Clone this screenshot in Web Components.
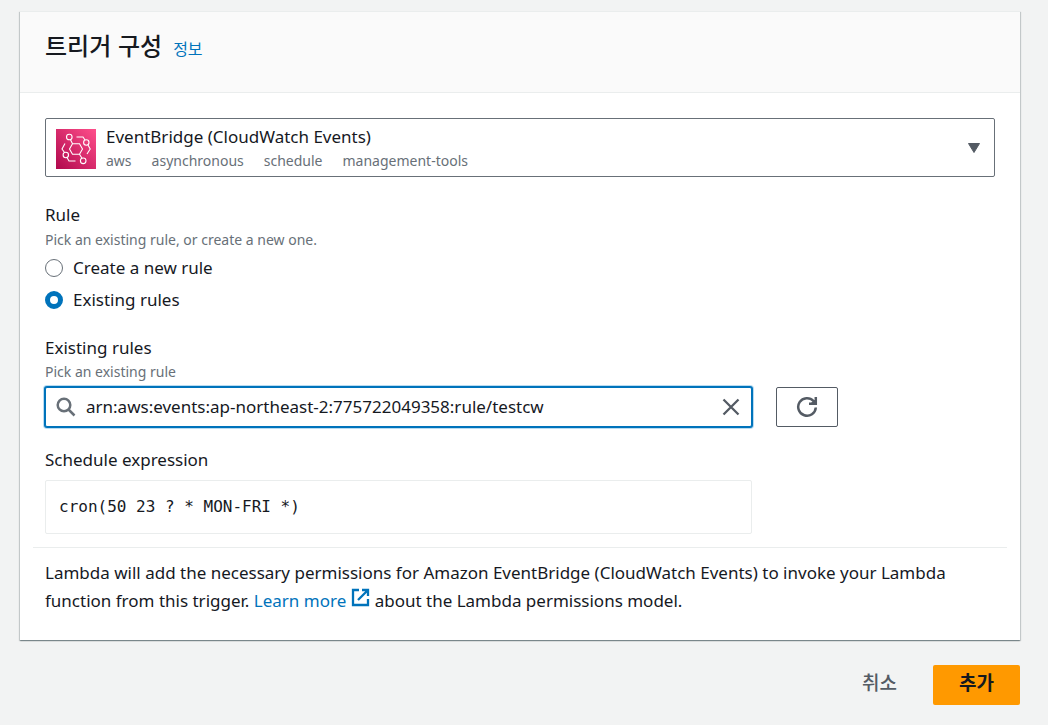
<!DOCTYPE html>
<html lang="ko">
<head>
<meta charset="utf-8">
<meta name="viewport" content="width=device-width, initial-scale=1">
<title>트리거 구성</title>
<style>
  :root {
    --text: #16191f;
    --muted: #687078;
    --icon: #545b64;
    --link: #0073bb;
    --line: #eaeded;
  }
  body {
    margin: 0;
    padding: 11px 28px 20px 20px;
    background: #f2f3f3;
    color: var(--text);
    font: 17px/24px "Noto Sans", "Noto Sans CJK KR", sans-serif;
  }
</style>
</head>
<body>
<trigger-page></trigger-page>

<script>
const define = (name, html) => {
  const template = document.createElement('template');
  template.innerHTML = html;
  customElements.define(name, class extends HTMLElement {
    constructor() {
      super();
      this.attachShadow({ mode: 'open' }).append(template.content.cloneNode(true));
    }
  });
};

define('info-card', `
  <style>
    :host { display: block; background: #fff; box-shadow: 0 1px 1px 0 rgba(0,28,36,.3), 1px 1px 1px 0 rgba(0,28,36,.15), -1px 1px 1px 0 rgba(0,28,36,.15); border-top: 1px solid var(--line); box-sizing: border-box; }
    header { display: flex; align-items: baseline; gap: 11px; padding: 17px 25px 31px; background: #fafafa; border-bottom: 1px solid var(--line); }
    .body { padding: 25px; }
  </style>
  <header><slot name="title"></slot><slot name="info"></slot></header>
  <div class="body"><slot></slot></div>
`);

define('trigger-select', `
  <style>
    :host { display: grid; grid-template-columns: auto 1fr auto; grid-template-rows: 28px 20px; column-gap: 10px; padding: 5px 14px 6px 11px; box-sizing: border-box; position: relative; color: var(--text); }
    select { position: absolute; inset: 0; width: 100%; height: 100%; box-sizing: border-box; appearance: none; margin: 0; padding: 0 50px 22px 60px; border: 1px solid #687078; border-radius: 2px; background: #fff; font: inherit; color: inherit; }
    .logo { grid-row: 1 / 3; align-self: center; margin-top: 4px; }
    .logo, .tags, .caret { position: relative; pointer-events: none; display: block; }
    .tags { grid-area: 2 / 2; display: flex; gap: 20px; font-size: 14px; line-height: 20px; color: var(--muted); }
    .caret { grid-area: 1 / 3 / 3 / 4; align-self: center; margin-top: 2px; }
  </style>
  <select aria-label="트리거"><option>EventBridge (CloudWatch Events)</option></select>
  <svg class="logo" width="40" height="40" viewBox="0 0 40 40" aria-hidden="true">
    <defs><linearGradient id="g" x1="0" y1="1" x2="1" y2="0"><stop stop-color="#b0084d"/><stop offset="1" stop-color="#ff4f8b"/></linearGradient></defs>
    <path fill="url(#g)" d="M0 0h40v40H0z"/>
    <g fill="none" stroke="#fff" stroke-width="1.1">
      <path d="M16.500 14.700h7l3 5.300-3 5.300h-7l-3-5.300zM14.400 10.500l2.100 4.200M23.500 25.300l2.500 4"/>
      <circle cx="13.300" cy="8" r="2.800"/><circle cx="30.300" cy="13.500" r="2.700"/><circle cx="9.800" cy="26" r="2.700"/><circle cx="27.200" cy="31.800" r="2.800"/>
      <path d="M20.500 8H27l2 3M32 16l2.200 4-3.200 5M9 14.500L6 20l2.500 3.500M11 28.500l2 3.500h6.500"/>
    </g>
  </svg>
  <div class="tags"><span>aws</span><span>asynchronous</span><span>schedule</span><span>management-tools</span></div>
  <svg class="caret" width="14" height="12" viewBox="0 0 14 12" aria-hidden="true"><path fill="#545b64" stroke="#545b64" stroke-linejoin="round" d="M1.500 1.500h11L7 10.500z"/></svg>
`);

define('rule-options', `
  <style>
    :host { display: block; }
    fieldset { margin: 0; padding: 0; border: 0; min-width: 0; }
    legend { padding: 0; }
    p { margin: 1px 0 0; font-size: 14px; color: var(--muted); }
    .list { display: grid; gap: 8px; margin-top: 4px; justify-items: start; }
    label { display: flex; align-items: center; gap: 10px; }
    input { appearance: none; box-sizing: border-box; width: 18px; height: 18px; margin: 0; border: 1px solid #687078; border-radius: 50%; background: #fff; }
    input:checked { border: 5px solid var(--link); }
  </style>
  <fieldset>
    <legend>Rule</legend>
    <p>Pick an existing rule, or create a new one.</p>
    <div class="list">
      <label><input type="radio" name="rule" value="new">Create a new rule</label>
      <label><input type="radio" name="rule" value="existing" checked>Existing rules</label>
    </div>
  </fieldset>
`);

define('rule-search', `
  <style>
    :host { display: grid; grid-template-columns: repeat(12, minmax(0, 1fr)); column-gap: 24px; }
    .label { grid-column: 1 / -1; margin-bottom: 3px; }
    label, small { display: block; }
    small { font-size: 14px; color: var(--muted); }
    .field { grid-column: span 9; display: flex; align-items: center; gap: 10px; height: 40px; box-sizing: border-box; padding: 0 11px 0 10px; border: 1px solid var(--link); border-radius: 2px; box-shadow: 0 0 0 1px var(--link), 0 0 0 2px #b9dcf2; background: #fff; }
    input { flex: 1; min-width: 0; padding: 0; border: 0; outline: 0; background: none; font: inherit; color: inherit; }
    button { display: grid; place-items: center; padding: 0; border: 0; background: none; color: var(--icon); }
    .refresh { width: 62px; height: 40px; border: 1px solid var(--icon); border-radius: 2px; background: #fff; }
    svg { display: block; fill: none; stroke: currentColor; }
    .search { color: var(--muted); }
  </style>
  <div class="label"><label for="rule">Existing rules</label><small id="hint">Pick an existing rule</small></div>
  <div class="field">
    <svg class="search" width="20" height="20" viewBox="0 0 20 20" stroke-width="2.500" aria-hidden="true"><circle cx="8" cy="8" r="6.300"/><path d="M12.500 12.500l6 6"/></svg>
    <input id="rule" type="text" aria-describedby="hint" value="arn:aws:events:ap-northeast-2:775722049358:rule/testcw">
    <button type="button" aria-label="Clear"><svg width="18" height="18" viewBox="0 0 18 18" stroke-width="2.300"><path d="M1.500 1.500l15 15M16.500 1.500l-15 15"/></svg></button>
  </div>
  <button class="refresh" type="button" aria-label="Refresh"><svg width="22" height="22" viewBox="0 0 22 22" stroke-width="2.500"><path d="M19.800 11.500A8.800 8.800 0 1 1 17.500 5l2 2M19.800 1v6.800H13"/><path fill="currentColor" stroke="none" d="M20 8h-6l4-4z"/></svg></button>
`);

define('schedule-expression', `
  <style>
    :host { display: grid; grid-template-columns: repeat(12, minmax(0, 1fr)); gap: 8px 24px; }
    h2 { grid-column: 1 / -1; margin: 0; font: inherit; }
    code { grid-column: span 9; box-sizing: border-box; padding: 0 13px; border: 1px solid var(--line); border-radius: 2px; font: 16px/52px "DejaVu Sans Mono", monospace; }
  </style>
  <h2>Schedule expression</h2>
  <code>cron(50 23 ? * MON-FRI *)</code>
`);

define('permission-note', `
  <style>
    :host { display: block; border-top: 1px solid var(--line); padding: 11px 12px 0; line-height: 28px; }
    p { margin: 0; }
    a { color: var(--link); text-decoration: none; }
    svg { margin-left: 5px; }
  </style>
  <p><span>Lambda will add the necessary permissions for Amazon EventBridge (CloudWatch Events) to invoke your Lambda</span> <span>function from this trigger.</span> <a href="#">Learn more<svg width="19" height="19" viewBox="0 0 19 19" fill="none" stroke="currentColor" stroke-width="2.300" aria-hidden="true"><path d="M8 2H2v15h15v-6M11 2h6v6M17 2L7 12"/></svg></a> <span>about the Lambda permissions model.</span></p>
`);

define('action-button', `
  <style>
    :host { display: block; }
    button { height: 40px; padding: 0 25px 7px; border: 1px solid transparent; border-radius: 2px; background: none; color: var(--icon); font: 500 19px/28px "Noto Sans CJK KR", sans-serif; }
    :host([primary]) button { background: #ff9900; color: var(--text); font-weight: 700; }
  </style>
  <button type="button"><slot></slot></button>
`);

define('trigger-page', `
  <style>
    :host { display: block; }
    h1 { margin: 0; font: 500 24px/32px "Noto Sans CJK KR", sans-serif; }
    a { color: var(--link); font: 16px/24px "Noto Sans CJK KR", sans-serif; text-decoration: none; }
    rule-options { margin-top: 26px; }
    rule-search { margin-top: 24px; }
    schedule-expression { margin-top: 21px; }
    permission-note { margin: 13px -12px 0; }
    footer { display: flex; justify-content: flex-end; gap: 10px; margin-top: 25px; }
  </style>
  <main>
    <info-card>
      <h1 slot="title">트리거 구성</h1>
      <a slot="info" href="#">정보</a>
      <trigger-select></trigger-select>
      <rule-options></rule-options>
      <rule-search></rule-search>
      <schedule-expression></schedule-expression>
      <permission-note></permission-note>
    </info-card>
  </main>
  <footer>
    <action-button>취소</action-button>
    <action-button primary>추가</action-button>
  </footer>
`);
</script>
</body>
</html>
